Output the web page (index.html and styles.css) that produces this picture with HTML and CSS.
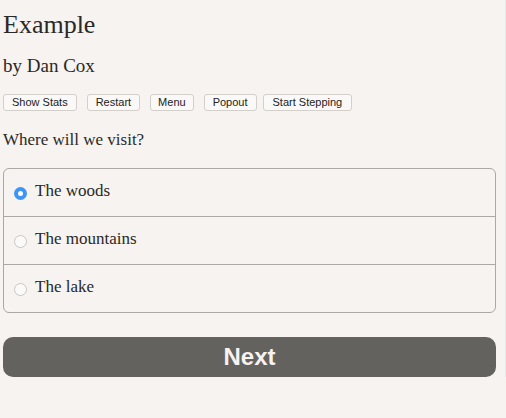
FILE: index.html
```html
<!DOCTYPE html>
<html lang="en">
<head>
<meta charset="utf-8">
<title>Example</title>
<link rel="stylesheet" href="styles.css">
</head>
<body>
<main class="story">
  <h1 class="title">Example</h1>
  <p class="byline">by Dan Cox</p>
  <div class="toolbar">
    <button class="tool">Show Stats</button>
    <button class="tool">Restart</button>
    <button class="tool tool-menu">Menu</button>
    <button class="tool">Popout</button>
    <button class="tool tool-last">Start Stepping</button>
  </div>
  <p class="prompt">Where will we visit?</p>
  <div class="choices">
    <label class="choice">
      <input class="radio" type="radio" name="visit" checked>
      <span class="choice-text">The woods</span>
    </label>
    <label class="choice">
      <input class="radio" type="radio" name="visit">
      <span class="choice-text">The mountains</span>
    </label>
    <label class="choice">
      <input class="radio" type="radio" name="visit">
      <span class="choice-text">The lake</span>
    </label>
  </div>
  <button class="next">Next</button>
</main>
</body>
</html>
```

FILE: styles.css
```css
html {
  background: #f6f3f0;
  border-right: 1px solid #e6eaf0;
}

body {
  margin: 0;
  padding: 0 0 0 3px;
  color: #2a2927;
  font-family: "Liberation Serif", "Times New Roman", serif;
}

.story {
  width: 493px;
  display: flex;
  flex-direction: column;
}

.title {
  margin: 10px 0 0;
  font-size: 26px;
  font-weight: normal;
  line-height: 30px;
}

.byline {
  margin: 15px 0 0;
  font-size: 19px;
  line-height: 22px;
}

.toolbar {
  margin-top: 17px;
  display: flex;
  gap: 10px;
}

.tool {
  height: 17px;
  margin: 0;
  padding: 0 8px;
  border: 1px solid #d3d0cc;
  border-radius: 3px;
  background: #faf9f7;
  color: #222;
  font-family: "Liberation Sans", Arial, sans-serif;
  font-size: 11px;
  line-height: 15px;
}

.tool-menu {
  padding: 0 7px;
}

.tool-last {
  margin-left: -4px;
  padding: 0 9px;
}

.prompt {
  margin: 19px 0 0;
  font-size: 17px;
  line-height: 20px;
}

.choices {
  margin-top: 18px;
  border: 1px solid #aaa9a7;
  border-radius: 6px;
  display: flex;
  flex-direction: column;
}

.choice {
  height: 48px;
  box-sizing: border-box;
  padding: 0 0 1px 10px;
  display: flex;
  align-items: center;
  gap: 8px;
  border-bottom: 1px solid #aaa9a7;
}

.choice:last-child {
  height: 47px;
  border-bottom: none;
}

.radio {
  appearance: none;
  -webkit-appearance: none;
  width: 13px;
  height: 13px;
  margin: 2px 0 0 0;
  box-sizing: border-box;
  border: 1px solid #c9c6c2;
  border-radius: 50%;
  background: #fbfaf9;
}

.radio:checked {
  border: 4.5px solid #3b96f7;
  background: #fff;
}

.choice-text {
  font-size: 17px;
  line-height: 20px;
  padding-bottom: 2px;
}

.next {
  margin: 24px 0 0;
  height: 40px;
  border: none;
  border-radius: 10px;
  background: #64625f;
  color: #f6f3f0;
  font-family: "Liberation Sans", Arial, sans-serif;
  font-size: 24px;
  font-weight: bold;
  line-height: 40px;
  padding: 0;
}
```
